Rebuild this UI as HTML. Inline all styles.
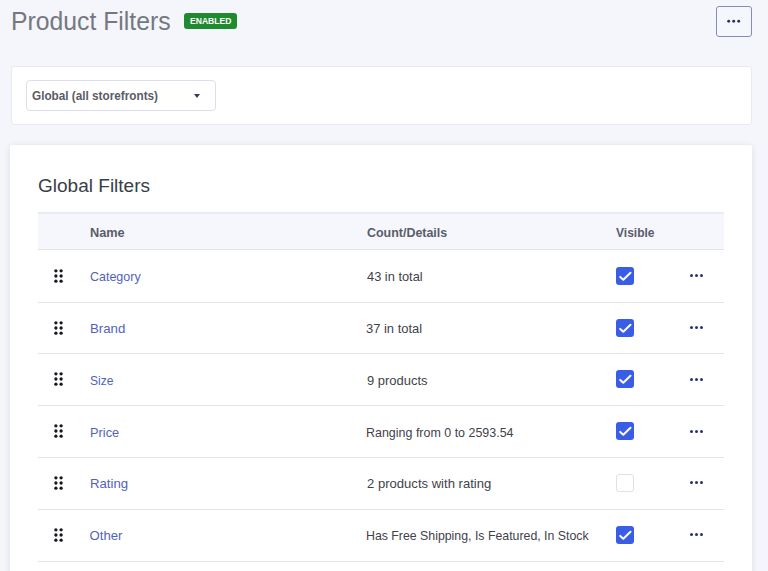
<!DOCTYPE html>
<html><head><meta charset="utf-8">
<style>
*{margin:0;padding:0;box-sizing:border-box}
html,body{width:768px;height:571px;overflow:hidden;background:#f4f6fb;font-family:"Liberation Sans",sans-serif;}
.t{position:absolute;white-space:nowrap;line-height:1;transform-origin:0 0}
.card1{position:absolute;left:11px;top:65.7px;width:741px;height:59px;background:#fff;border:1px solid #e8eaf0;border-radius:3px}
.card2{position:absolute;left:10.2px;top:144.5px;width:741.8px;height:460px;background:#fff;border-radius:2px;box-shadow:0 1px 6px rgba(40,50,90,.12)}
.btn{position:absolute;left:716px;top:6px;width:36px;height:31px;border:1.7px solid #868cb6;border-radius:3px;background:#f6f7fc}
.sel{position:absolute;left:26px;top:79.5px;width:190px;height:31px;border:1px solid #dcdfe8;border-radius:4px;background:#fff}
.caret{position:absolute;left:194px;top:94px;width:0;height:0;border-left:3.5px solid transparent;border-right:3.5px solid transparent;border-top:4px solid #3a3d4a}
.badge{position:absolute;left:183.6px;top:12.6px;width:53.8px;height:16.8px;background:#1f8a30;border-radius:3px}
.hdr{position:absolute;left:38px;top:212.3px;width:686px;height:37.7px;background:#f5f7fc;border-top:2px solid #e9ebf0;border-bottom:1.5px solid #e2e4eb}
.line{position:absolute;left:38px;width:686px;height:1px;background:#e3e5ec}
.dots3{position:absolute;width:14px;height:3px}
.dots3 i{position:absolute;top:0;width:3px;height:3px;border-radius:50%;background:#28306f}
.grip{position:absolute;width:9px;height:14px}
.grip i{position:absolute;width:3.2px;height:3.2px;border-radius:50%;background:#15171e}
.cb{position:absolute;left:616px;width:18px;height:18px;border-radius:3px;background:#3a5de8}
.cb svg{position:absolute;left:0;top:0}
.cbe{position:absolute;left:616px;width:18px;height:18px;border-radius:3px;background:#fff;border:1px solid #dfe1e8}
.link{color:#5262bc}
.txt{color:#3f424b}
.hd{color:#5a5d69;font-weight:bold}
</style></head><body>
<div class="badge"></div>
<div class="t " id="title" style="left:10.50px;top:8.00px;font-size:26.6px;color:#757881;transform:scaleX(0.9308);">Product Filters</div>
<div class="t " id="enabled" style="left:190.00px;top:16.10px;font-size:9.9px;color:#fff;font-weight:bold;transform:scaleX(0.8680);">ENABLED</div>
<div class="btn"></div>
<svg style="position:absolute;left:724px;top:16px" width="20" height="10" viewBox="0 0 20 10"><g fill="#28306f"><circle cx="4.7" cy="5.2" r="1.45"/><circle cx="9.7" cy="5.2" r="1.45"/><circle cx="14.7" cy="5.2" r="1.45"/></g></svg>
<div class="card1"></div><div class="sel"></div>
<div class="t " id="selt" style="left:32.00px;top:90.10px;font-size:12.2px;color:#5a5c65;font-weight:bold;transform:scaleX(0.9642);">Global (all storefronts)</div>
<div class="caret"></div>
<div class="card2"></div>
<div class="t " id="gf" style="left:38.20px;top:177.30px;font-size:18.9px;color:#3a3d48;transform:scaleX(1.0069);">Global Filters</div>
<div class="hdr"></div>
<div class="t hd" id="h1" style="left:89.75px;top:226.80px;font-size:12.6px;transform:scaleX(1.0109);">Name</div>
<div class="t hd" id="h2" style="left:366.70px;top:226.80px;font-size:12.6px;transform:scaleX(0.9882);">Count/Details</div>
<div class="t hd" id="h3" style="left:615.75px;top:226.80px;font-size:12.6px;transform:scaleX(0.9545);">Visible</div>
<div class="t link" id="n0" style="left:89.80px;top:270.11px;font-size:13.1px;transform:scaleX(0.9529);">Category</div>
<div class="t txt" id="d0" style="left:366.75px;top:270.11px;font-size:13.1px;transform:scaleX(0.9797);">43 in total</div>
<svg style="position:absolute;left:50px;top:265.70px" width="16" height="20" viewBox="0 0 16 20"><g fill="#15171e"><circle cx="5.9" cy="4.8" r="1.65"/><circle cx="11.1" cy="4.8" r="1.65"/><circle cx="5.9" cy="10" r="1.65"/><circle cx="11.1" cy="10" r="1.65"/><circle cx="5.9" cy="15.2" r="1.65"/><circle cx="11.1" cy="15.2" r="1.65"/></g></svg>
<div class="cb" style="top:266.70px"><svg width="18" height="18" viewBox="0 0 18 18"><path d="M4.2 9.9 L7.3 12.7 L14.5 5.8" fill="none" stroke="#fff" stroke-width="2" stroke-linecap="round" stroke-linejoin="round"/></svg></div>
<div class="dots3" style="left:690px;top:274.20px"><i style="left:0"></i><i style="left:5px"></i><i style="left:10px"></i></div>
<div class="line" style="top:301.60px"></div>
<div class="t link" id="n1" style="left:89.50px;top:321.91px;font-size:13.1px;transform:scaleX(1.0109);">Brand</div>
<div class="t txt" id="d1" style="left:365.90px;top:321.91px;font-size:13.1px;transform:scaleX(0.9885);">37 in total</div>
<svg style="position:absolute;left:50px;top:317.50px" width="16" height="20" viewBox="0 0 16 20"><g fill="#15171e"><circle cx="5.9" cy="4.8" r="1.65"/><circle cx="11.1" cy="4.8" r="1.65"/><circle cx="5.9" cy="10" r="1.65"/><circle cx="11.1" cy="10" r="1.65"/><circle cx="5.9" cy="15.2" r="1.65"/><circle cx="11.1" cy="15.2" r="1.65"/></g></svg>
<div class="cb" style="top:318.50px"><svg width="18" height="18" viewBox="0 0 18 18"><path d="M4.2 9.9 L7.3 12.7 L14.5 5.8" fill="none" stroke="#fff" stroke-width="2" stroke-linecap="round" stroke-linejoin="round"/></svg></div>
<div class="dots3" style="left:690px;top:326.00px"><i style="left:0"></i><i style="left:5px"></i><i style="left:10px"></i></div>
<div class="line" style="top:353.40px"></div>
<div class="t link" id="n2" style="left:90.00px;top:373.71px;font-size:13.1px;transform:scaleX(0.9186);">Size</div>
<div class="t txt" id="d2" style="left:366.70px;top:373.71px;font-size:13.1px;transform:scaleX(0.9904);">9 products</div>
<svg style="position:absolute;left:50px;top:369.30px" width="16" height="20" viewBox="0 0 16 20"><g fill="#15171e"><circle cx="5.9" cy="4.8" r="1.65"/><circle cx="11.1" cy="4.8" r="1.65"/><circle cx="5.9" cy="10" r="1.65"/><circle cx="11.1" cy="10" r="1.65"/><circle cx="5.9" cy="15.2" r="1.65"/><circle cx="11.1" cy="15.2" r="1.65"/></g></svg>
<div class="cb" style="top:370.30px"><svg width="18" height="18" viewBox="0 0 18 18"><path d="M4.2 9.9 L7.3 12.7 L14.5 5.8" fill="none" stroke="#fff" stroke-width="2" stroke-linecap="round" stroke-linejoin="round"/></svg></div>
<div class="dots3" style="left:690px;top:377.80px"><i style="left:0"></i><i style="left:5px"></i><i style="left:10px"></i></div>
<div class="line" style="top:405.20px"></div>
<div class="t link" id="n3" style="left:89.50px;top:425.51px;font-size:13.1px;transform:scaleX(0.9765);">Price</div>
<div class="t txt" id="d3" style="left:366.20px;top:425.51px;font-size:13.1px;transform:scaleX(0.9516);">Ranging from 0 to 2593.54</div>
<svg style="position:absolute;left:50px;top:421.10px" width="16" height="20" viewBox="0 0 16 20"><g fill="#15171e"><circle cx="5.9" cy="4.8" r="1.65"/><circle cx="11.1" cy="4.8" r="1.65"/><circle cx="5.9" cy="10" r="1.65"/><circle cx="11.1" cy="10" r="1.65"/><circle cx="5.9" cy="15.2" r="1.65"/><circle cx="11.1" cy="15.2" r="1.65"/></g></svg>
<div class="cb" style="top:422.10px"><svg width="18" height="18" viewBox="0 0 18 18"><path d="M4.2 9.9 L7.3 12.7 L14.5 5.8" fill="none" stroke="#fff" stroke-width="2" stroke-linecap="round" stroke-linejoin="round"/></svg></div>
<div class="dots3" style="left:690px;top:429.60px"><i style="left:0"></i><i style="left:5px"></i><i style="left:10px"></i></div>
<div class="line" style="top:457.00px"></div>
<div class="t link" id="n4" style="left:90.10px;top:477.31px;font-size:13.1px;transform:scaleX(1.0055);">Rating</div>
<div class="t txt" id="d4" style="left:367.05px;top:477.31px;font-size:13.1px;transform:scaleX(0.9985);">2 products with rating</div>
<svg style="position:absolute;left:50px;top:472.90px" width="16" height="20" viewBox="0 0 16 20"><g fill="#15171e"><circle cx="5.9" cy="4.8" r="1.65"/><circle cx="11.1" cy="4.8" r="1.65"/><circle cx="5.9" cy="10" r="1.65"/><circle cx="11.1" cy="10" r="1.65"/><circle cx="5.9" cy="15.2" r="1.65"/><circle cx="11.1" cy="15.2" r="1.65"/></g></svg>
<div class="cbe" style="top:473.90px"></div>
<div class="dots3" style="left:690px;top:481.40px"><i style="left:0"></i><i style="left:5px"></i><i style="left:10px"></i></div>
<div class="line" style="top:508.80px"></div>
<div class="t link" id="n5" style="left:89.60px;top:529.11px;font-size:13.1px;">Other</div>
<div class="t txt" id="d5" style="left:366.20px;top:529.11px;font-size:13.1px;transform:scaleX(0.9411);">Has Free Shipping, Is Featured, In Stock</div>
<svg style="position:absolute;left:50px;top:524.70px" width="16" height="20" viewBox="0 0 16 20"><g fill="#15171e"><circle cx="5.9" cy="4.8" r="1.65"/><circle cx="11.1" cy="4.8" r="1.65"/><circle cx="5.9" cy="10" r="1.65"/><circle cx="11.1" cy="10" r="1.65"/><circle cx="5.9" cy="15.2" r="1.65"/><circle cx="11.1" cy="15.2" r="1.65"/></g></svg>
<div class="cb" style="top:525.70px"><svg width="18" height="18" viewBox="0 0 18 18"><path d="M4.2 9.9 L7.3 12.7 L14.5 5.8" fill="none" stroke="#fff" stroke-width="2" stroke-linecap="round" stroke-linejoin="round"/></svg></div>
<div class="dots3" style="left:690px;top:533.20px"><i style="left:0"></i><i style="left:5px"></i><i style="left:10px"></i></div>
<div class="line" style="top:560.60px"></div>
</body></html>
